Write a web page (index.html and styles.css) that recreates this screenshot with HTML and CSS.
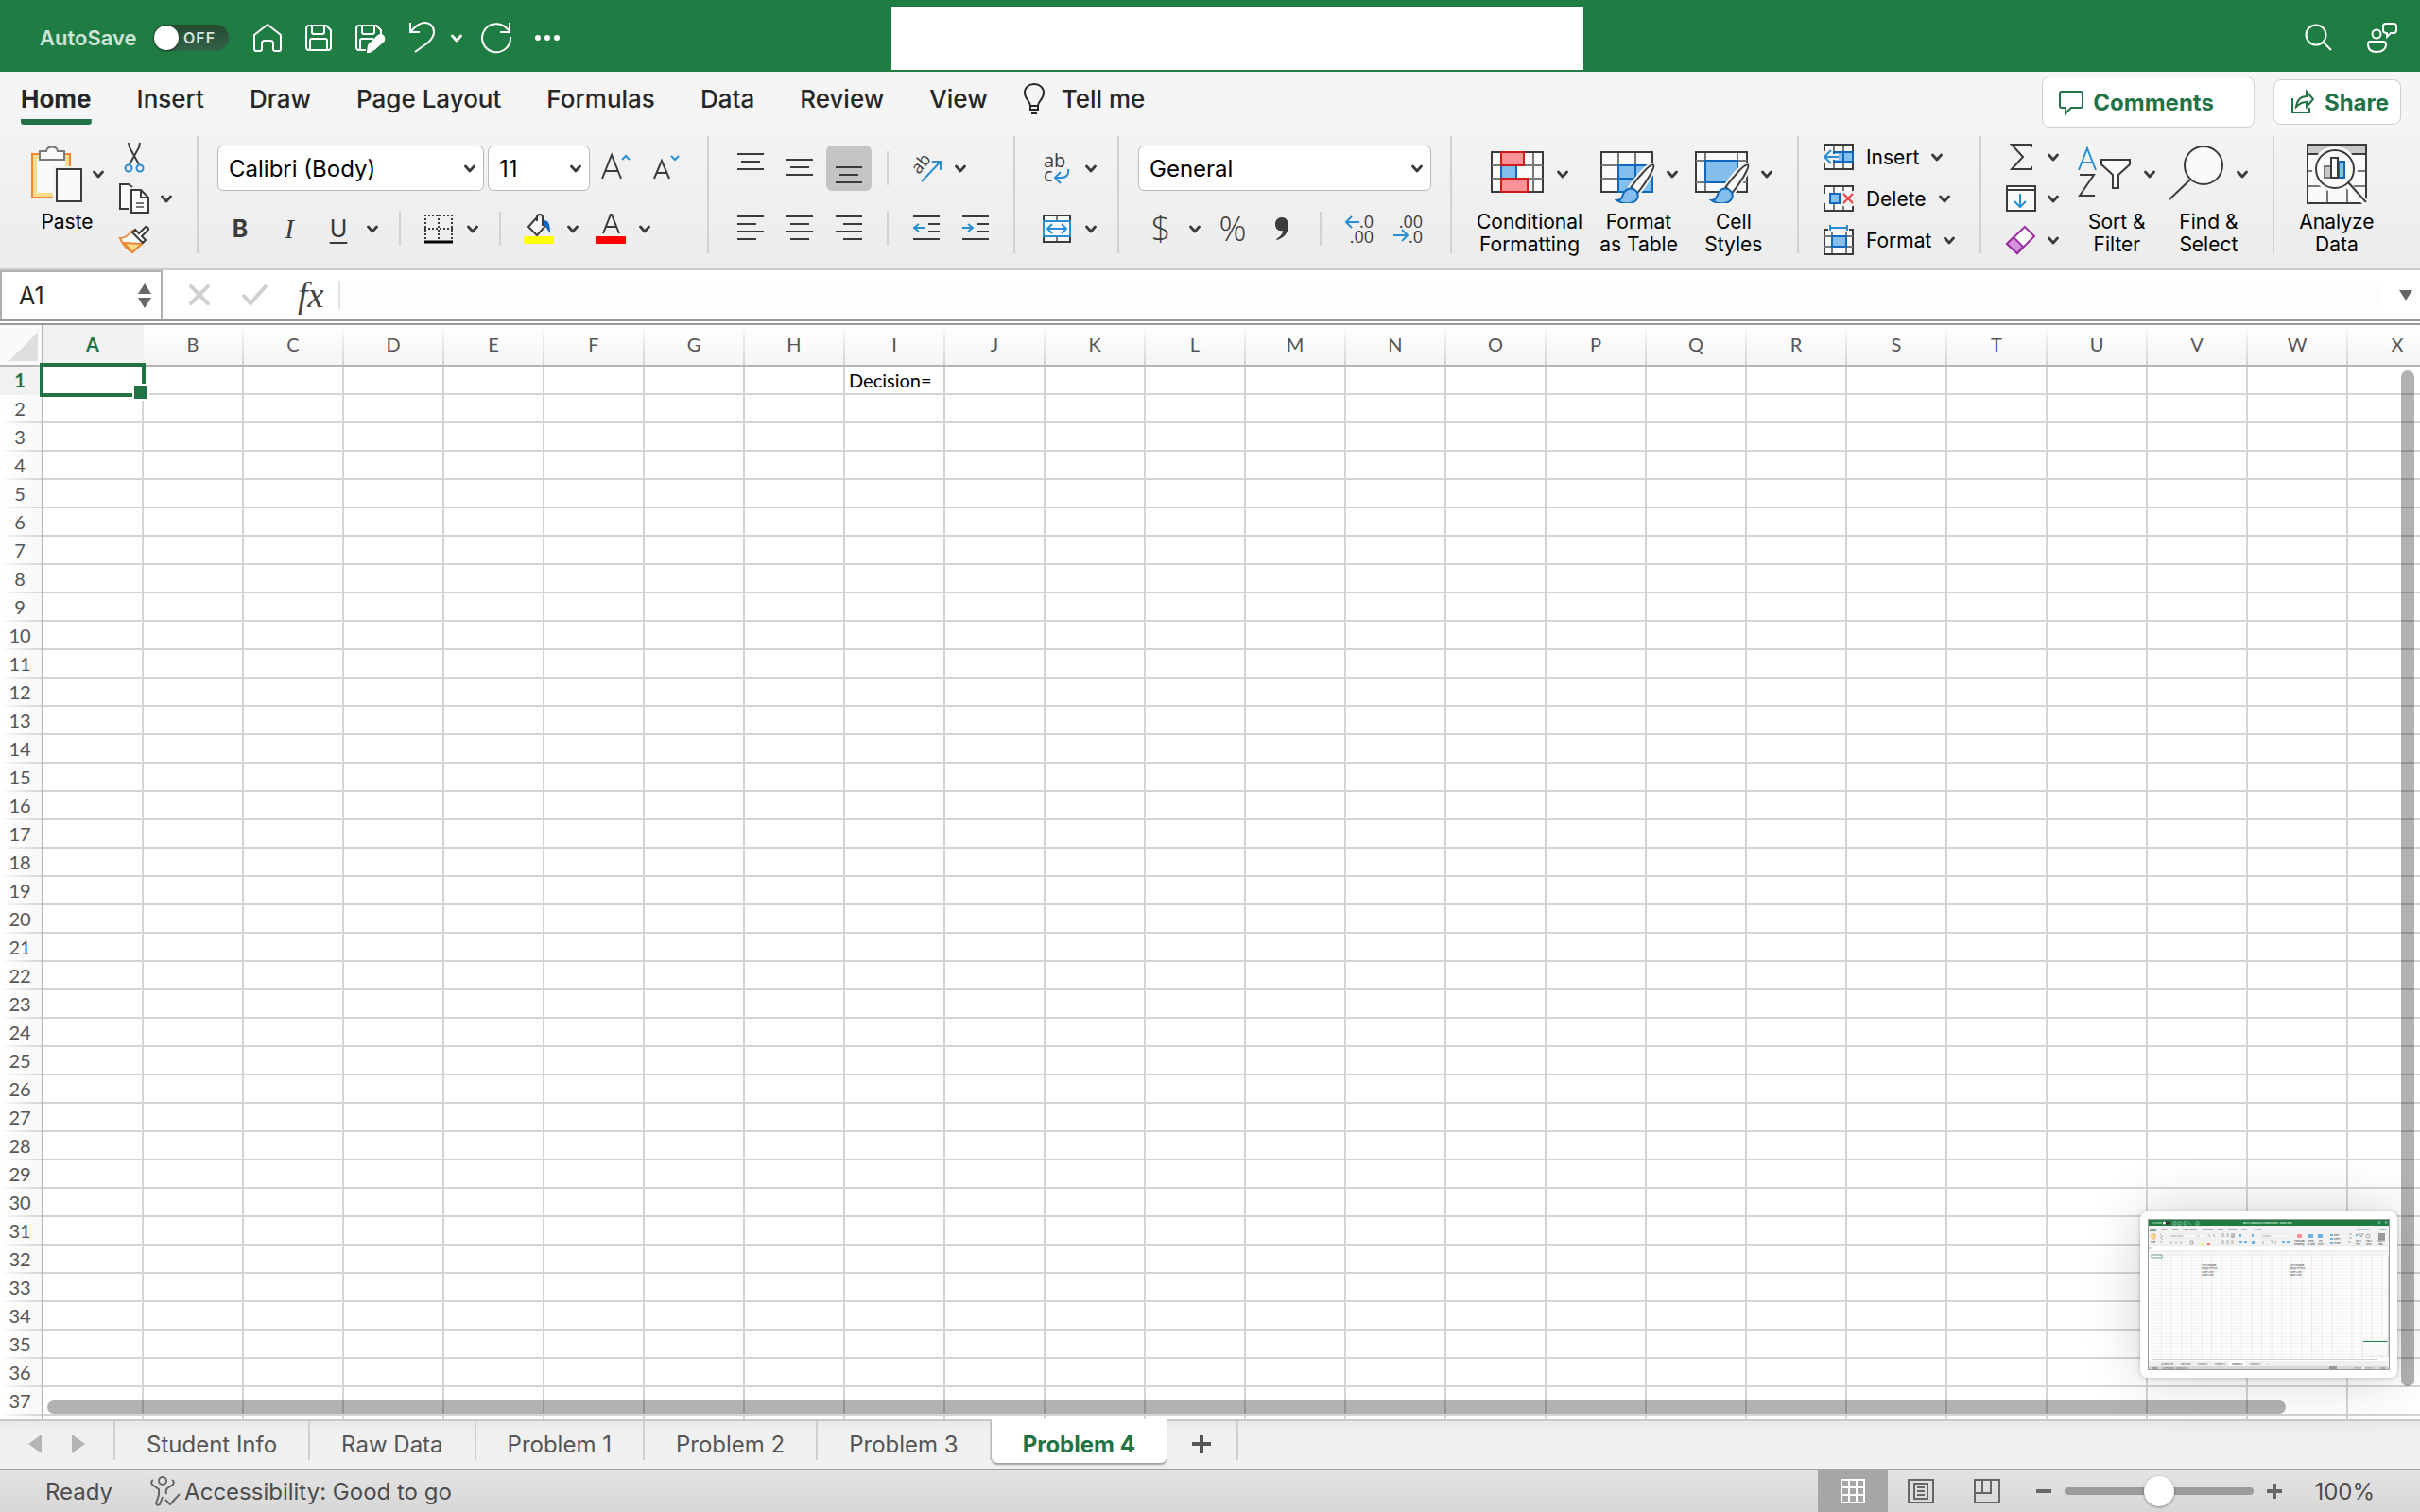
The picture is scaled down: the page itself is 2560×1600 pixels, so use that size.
FILE: index.html
```html
<!DOCTYPE html>
<html lang="en">
<head>
    <meta charset="UTF-8">
    <meta name="viewport" content="width=device-width, initial-scale=1.0">
    <title>Workbook</title>
    <link rel="stylesheet" href="styles.css">
</head>
<body>
    <svg class="sprite" aria-hidden="true">
        <symbol id="chevron" viewBox="0 0 12 9"><path d="M1.5 2L6 7l4.5-5" fill="none" stroke="currentColor" stroke-width="2.8" stroke-linecap="round" stroke-linejoin="round"/></symbol>
        <symbol id="brush" viewBox="0 0 42 42">
            <path d="M40 1C36 0 24 14 16 25l7 6C31 21 42 4 40 1Z" fill="#fafafa" stroke="#f1f1f1" stroke-width="6"/>
            <path d="M39.500 1.500C36 0 24 14 16 25l7 6C31 21 42 4 39.500 1.500Z" fill="#fafafa" stroke="#3b3b3b" stroke-width="2"/>
            <path d="M1 39c6 0 5-5 8-9 4-5 10-4 13 0 3 5 0 11-7 12-6 1-11-1-14-3Z" fill="#83beec" stroke="#0f68bc" stroke-width="2"/>
        </symbol>
    </svg>

    <header class="titlebar">
        <label class="autosave" for="autosave">AutoSave</label>
        <span class="switch">
            <input type="checkbox" id="autosave">
            <span class="switch-text">OFF</span>
        </span>
        <div class="quick">
            <button type="button" aria-label="Home"><svg width="30" height="32" viewBox="0 0 30 32"><path d="M1 28V13L15 2l14 11v15q0 2-2 2h-4q-2 0-2-2v-6q0-3-3-3h-6q-3 0-3 3v6q0 2-2 2H3q-2 0-2-2Z"/></svg></button>
            <button type="button" aria-label="Save"><svg width="28" height="32" viewBox="0 -2 28 32"><path d="M1 4q0-3 3-3h18l5 5v18q0 3-3 3H4q-3 0-3-3ZM7 1v7q0 2 2 2h9q2 0 2-2V1M5 27V17q0-2 2-2h14q2 0 2 2v10"/></svg></button>
            <button type="button" aria-label="Save a copy"><svg width="32" height="32" viewBox="0 -2 32 32"><path d="M11 27H4q-3 0-3-3V4q0-3 3-3h18l5 5v6M7 1v7q0 2 2 2h9q2 0 2-2V1M5 27V17q0-2 2-2h12"/><path class="solid" d="M13 29l1-7 10-10q3-2 5 0t1 5L20 26l-5 3Z"/></svg></button>
            <button type="button" aria-label="Undo"><svg width="28" height="34" viewBox="0 0 28 34"><path d="M1 1v10h10M1 11C7 4 11 1 16 1c6 0 10 4 10 10 0 5-3 8-6 11L6 32"/></svg></button>
            <button type="button" class="undo-more" aria-label="Undo history"><svg width="12" height="9"><use href="#chevron"/></svg></button>
            <button type="button" aria-label="Redo"><svg width="32" height="32" viewBox="0 0 32 32"><path d="M31 15A15 15 0 1 1 26 5l4 4M30 0v10H20"/></svg></button>
            <button type="button" aria-label="More"><svg width="26" height="6" viewBox="0 0 26 6"><circle class="solid" cx="3" cy="3" r="2"/><circle class="solid" cx="13" cy="3" r="2"/><circle class="solid" cx="23" cy="3" r="2"/></svg></button>
        </div>
        <div class="doc-title"></div>
        <div class="title-right">
            <button type="button" aria-label="Search"><svg width="30" height="30" viewBox="0 0 30 30"><circle cx="12" cy="12" r="10.500"/><path d="M20 20l8 8"/></svg></button>
            <button type="button" aria-label="Presence"><svg width="32" height="32" viewBox="0 0 32 32"><circle cx="10" cy="12" r="4.500"/><path d="M3 20h14q3 0 3 3c0 5-4 8-10 8s-9-3-9-8q0-3 2-3ZM20 1h8q3 0 3 3v4q0 3-3 3h-3l-4 4v-4q-4 0-4-3V4q0-3 3-3Z"/></svg></button>
        </div>
    </header>

    <nav class="tabs">
        <a href="#" class="active">Home</a>
        <a href="#">Insert</a>
        <a href="#">Draw</a>
        <a href="#">Page Layout</a>
        <a href="#">Formulas</a>
        <a href="#">Data</a>
        <a href="#">Review</a>
        <a href="#">View</a>
        <a href="#" class="tell-me"><svg width="22" height="34" viewBox="0 0 22 34"><path d="M7 24c0-5-6-7-6-14 0-5 4-9 10-9s10 4 10 9c0 7-6 9-6 14v4H7ZM7 24h8M8 32h6" fill="none" stroke="#262626" stroke-width="2"/></svg>Tell me</a>
        <div class="tabs-right">
            <button type="button" class="comments"><svg width="26" height="26" viewBox="0 0 26 26"><path d="M3 2h20q2 0 2 2v13q0 2-2 2H13l-6 6v-6H3q-2 0-2-2V4q0-2 2-2Z"/></svg>Comments</button>
            <button type="button" class="share"><svg width="26" height="26" viewBox="0 0 26 26"><path d="M2 9v15h18v-5M17 2v5C11 7 7 11 6 18c3-3 6-5 11-5v5l7-8Z"/></svg>Share</button>
        </div>
    </nav>

    <section class="ribbon">
        <div class="group clipboard">
            <button type="button" class="big">
                <span class="big-icon"><svg width="56" height="60" viewBox="0 0 56 60"><path d="M2 9h40v46H2z" fill="#f8dc8e" stroke="#ed8733" stroke-width="2"/><path d="M7 14h30v36H7z" fill="#fafafa"/><path d="M24 22h32v38H24z" fill="#f2f2f2"/><path d="M10 6h7c1-6 11-6 12 0h7v9H10z" fill="#fafafa" stroke="#787878" stroke-width="2"/><path d="M28 25h26v34H28z" fill="#fafafa" stroke="#3b3b3b" stroke-width="2"/></svg>
                <svg class="chev" width="12" height="9"><use href="#chevron"/></svg></span>
                <span class="caption">Paste</span>
            </button>
            <div class="stack">
                <div class="line"><button type="button" aria-label="Cut"><svg width="32" height="32" viewBox="0 0 32 32"><path d="M10 1l1 5 10 18M22 1l-1 5-10 18" fill="none" stroke="#3b3b3b" stroke-width="2"/><circle cx="10" cy="28" r="3.500" fill="none" stroke="#2a8ed4" stroke-width="2"/><circle cx="22" cy="28" r="3.500" fill="none" stroke="#2a8ed4" stroke-width="2"/></svg></button></div>
                <div class="line"><button type="button" aria-label="Copy"><svg width="32" height="32" viewBox="0 0 32 32"><path d="M10 27H1V1h9l4 3" fill="#fafafa" stroke="#3b3b3b" stroke-width="2"/><path d="M13 7h10l8 8v16H13z" fill="#fafafa" stroke="#3b3b3b" stroke-width="2"/><path d="M23 7v8h8" fill="none" stroke="#3b3b3b" stroke-width="2"/><path d="M18 21h8M18 25h8" stroke="#787878" stroke-width="2"/></svg></button><button type="button" class="drop" aria-label="Copy options"><svg width="12" height="9"><use href="#chevron"/></svg></button></div>
                <div class="line"><button type="button" aria-label="Format Painter"><svg width="32" height="32" viewBox="0 0 32 32"><path d="M1 14c5 0 9-3 13-8l12 12c-5 5-9 7-12 11C9 26 4 21 1 14Z" fill="#fafafa" stroke="#ed8733" stroke-width="2"/><path d="M5 19l19 1-10 9Z" fill="#f8dc8e" stroke="#ed8733" stroke-width="2"/><path d="M14 8l3-3 4 4 7-7q3 0 3 3l-7 7 4 4-3 3Z" fill="#fafafa" stroke="#3b3b3b" stroke-width="2"/></svg></button></div>
            </div>
        </div>

        <div class="group rows">
            <div class="row">
                <span class="select font-name"><select aria-label="Font"><option>Calibri (Body)</option></select><svg width="12" height="9"><use href="#chevron"/></svg></span>
                <span class="select font-size"><select aria-label="Font size"><option>11</option></select><svg width="12" height="9"><use href="#chevron"/></svg></span>
                <button type="button" class="tool" aria-label="Increase font size"><svg width="32" height="32" viewBox="0 0 32 32"><path d="M1 27L11 2l10 25M4 19h14" fill="none" stroke="#3b3b3b" stroke-width="2"/><path d="M22 7l4-4 4 4" fill="none" stroke="#2a8ed4" stroke-width="2"/></svg></button>
                <button type="button" class="tool" aria-label="Decrease font size"><svg width="32" height="32" viewBox="0 0 32 32"><path d="M4 27l8-19 8 19M7 21h10" fill="none" stroke="#3b3b3b" stroke-width="2"/><path d="M22 3l4 4 4-4" fill="none" stroke="#2a8ed4" stroke-width="2"/></svg></button>
            </div>
            <div class="row low">
                <button type="button" class="tool bold">B</button>
                <button type="button" class="tool italic">I</button>
                <span class="split"><button type="button" class="tool underline">U</button><button type="button" class="drop" aria-label="Underline options"><svg width="12" height="9"><use href="#chevron"/></svg></button></span>
                <span class="sep"></span>
                <span class="split"><button type="button" class="tool" aria-label="Borders"><svg width="30" height="30" viewBox="0 0 30 30"><path d="M0 1h30M0 15h30M1 0v28M15 0v28M29 0v28" stroke="#3b3b3b" stroke-width="2" stroke-dasharray="2 2"/><path d="M0 29h30" stroke="#000" stroke-width="3"/></svg></button><button type="button" class="drop" aria-label="Border options"><svg width="12" height="9"><use href="#chevron"/></svg></button></span>
                <span class="sep"></span>
                <span class="split"><button type="button" class="tool" aria-label="Fill color"><svg width="32" height="32" viewBox="0 0 32 32"><path d="M0 24h32v8H0z" fill="#ffff0a"/><path d="M14 4L5 14l9 9 10-11-4-3" fill="#fafafa" stroke="#3b3b3b" stroke-width="2"/><path d="M14 8V4q0-3 3-3t3 3v9" fill="none" stroke="#3b3b3b" stroke-width="2"/><path d="M21 7c6 0 7 5 7 14-3-4-4-7-7-9Z" fill="#0f68bc"/></svg></button><button type="button" class="drop" aria-label="Fill options"><svg width="12" height="9"><use href="#chevron"/></svg></button></span>
                <span class="split"><button type="button" class="tool" aria-label="Font color"><svg width="32" height="32" viewBox="0 0 32 32"><path d="M0 24h32v8H0z" fill="#fe0000"/><path d="M8 21l8-20h1l8 20M11 14h11" fill="none" stroke="#3b3b3b" stroke-width="2"/></svg></button><button type="button" class="drop" aria-label="Font color options"><svg width="12" height="9"><use href="#chevron"/></svg></button></span>
            </div>
        </div>

        <div class="group rows tight">
            <div class="row">
                <button type="button" class="tool" aria-label="Top align"><svg class="lines" width="28" height="32"><path d="M0 1h28M4 9h20M0 17h28"/></svg></button>
                <button type="button" class="tool" aria-label="Middle align"><svg class="lines" width="28" height="32"><path d="M0 7h28M4 15h20M0 23h28"/></svg></button>
                <button type="button" class="tool pressed" aria-label="Bottom align"><svg class="lines" width="28" height="32"><path d="M0 15h28M4 23h20M0 31h28"/></svg></button>
                <span class="sep"></span>
                <span class="split"><button type="button" class="tool" aria-label="Orientation"><svg width="32" height="32" viewBox="0 0 32 32"><text x="8" y="23" transform="rotate(-50 8 23)" font-size="18">ab</text><path d="M11 30L31 9M22 9h9v9" fill="none" stroke="#2a8ed4" stroke-width="2"/></svg></button><button type="button" class="drop" aria-label="Orientation options"><svg width="12" height="9"><use href="#chevron"/></svg></button></span>
            </div>
            <div class="row low">
                <button type="button" class="tool" aria-label="Align left"><svg class="lines" width="28" height="28"><path d="M0 1h28M0 9h20M0 17h28M0 25h20"/></svg></button>
                <button type="button" class="tool" aria-label="Center"><svg class="lines" width="28" height="28"><path d="M0 1h28M4 9h20M0 17h28M4 25h20"/></svg></button>
                <button type="button" class="tool" aria-label="Align right"><svg class="lines" width="28" height="28"><path d="M0 1h28M8 9h20M0 17h28M8 25h20"/></svg></button>
                <span class="sep"></span>
                <button type="button" class="tool" aria-label="Decrease indent"><svg class="lines" width="28" height="28"><path d="M0 1h28M16 9h12M16 17h12M0 25h28"/><path class="blue" d="M12 13H2M6 9l-5 4 5 4"/></svg></button>
                <button type="button" class="tool" aria-label="Increase indent"><svg class="lines" width="28" height="28"><path d="M0 1h28M16 9h12M16 17h12M0 25h28"/><path class="blue" d="M0 13h10M6 9l5 4-5 4"/></svg></button>
            </div>
        </div>

        <div class="group rows tight">
            <div class="row">
                <span class="split"><button type="button" class="tool" aria-label="Wrap text"><svg width="30" height="32" viewBox="0 0 30 32"><text x="1" y="15" font-size="20">ab</text><text x="1" y="30" font-size="20">c</text><path d="M27 17c1 6-2 9-8 9h-5M19 20l-6 6 6 6" fill="none" stroke="#2a8ed4" stroke-width="2"/></svg></button><button type="button" class="drop" aria-label="Wrap options"><svg width="12" height="9"><use href="#chevron"/></svg></button></span>
            </div>
            <div class="row low">
                <span class="split"><button type="button" class="tool" aria-label="Merge"><svg width="30" height="30" viewBox="0 0 30 30"><path d="M1 1h28v28H1z" fill="#fafafa" stroke="#3b3b3b" stroke-width="2"/><path d="M15 2v5M15 23v5" stroke="#787878" stroke-width="2"/><path d="M1 7h28v16H1z" fill="#fafafa" stroke="#2a8ed4" stroke-width="2"/><path d="M5 15h20M10 10l-5 5 5 5M20 10l5 5-5 5" fill="none" stroke="#2a8ed4" stroke-width="2"/></svg></button><button type="button" class="drop" aria-label="Merge options"><svg width="12" height="9"><use href="#chevron"/></svg></button></span>
            </div>
        </div>

        <div class="group rows">
            <div class="row">
                <span class="select number-format"><select aria-label="Number format"><option>General</option></select><svg width="12" height="9"><use href="#chevron"/></svg></span>
            </div>
            <div class="row low">
                <span class="split"><button type="button" class="tool symbol">$</button><button type="button" class="drop" aria-label="Currency options"><svg width="12" height="9"><use href="#chevron"/></svg></button></span>
                <button type="button" class="tool symbol">%</button>
                <button type="button" class="tool" aria-label="Comma style"><svg width="16" height="26" viewBox="0 0 16 26"><path d="M8 1c5 0 7 4 7 9 0 7-4 12-12 15l-1-1c5-3 7-6 7-9-5 1-8-2-8-7 0-4 3-7 7-7Z" fill="#3b3b3b"/></svg></button>
                <span class="sep"></span>
                <button type="button" class="tool" aria-label="Increase decimal"><svg width="32" height="32" viewBox="0 0 32 32"><text x="31" y="15" text-anchor="end" font-size="18">.0</text><text x="31" y="31" text-anchor="end" font-size="18">.00</text><path d="M16 9H2M8 3L2 9l6 6" fill="none" stroke="#2a8ed4" stroke-width="2"/></svg></button>
                <button type="button" class="tool" aria-label="Decrease decimal"><svg width="32" height="32" viewBox="0 0 32 32"><text x="31" y="15" text-anchor="end" font-size="18">.00</text><text x="31" y="31" text-anchor="end" font-size="18">.0</text><path d="M0 23h15M9 17l6 6-6 6" fill="none" stroke="#2a8ed4" stroke-width="2"/></svg></button>
            </div>
        </div>

        <div class="group wide styles">
            <button type="button" class="big">
                <span class="big-icon"><svg width="56" height="60" viewBox="0 0 56 60"><path d="M1 7h54v42H1z" fill="#fafafa" stroke="#3b3b3b" stroke-width="2"/><path d="M45 8v40M1 21h54M1 35h54" stroke="#787878" stroke-width="2"/><path d="M28 22h16v12H28z" fill="#fafafa"/><path d="M11 21h16v14H11z" fill="#83beec" stroke="#0f68bc" stroke-width="2"/><path d="M11 7h24v14H11zM11 35h28v14H11z" fill="#fc9197" stroke="#d11b1b" stroke-width="2"/></svg>
                <svg class="chev" width="12" height="9"><use href="#chevron"/></svg></span>
                <span class="caption">Conditional<br>Formatting</span>
            </button>
            <button type="button" class="big">
                <span class="big-icon"><svg width="56" height="60" viewBox="0 0 56 60"><path d="M1 7h54v42H1z" fill="#fafafa" stroke="#3b3b3b" stroke-width="2"/><path d="M19 21h36v28H19z" fill="#83beec" stroke="#0f68bc" stroke-width="2"/><path d="M37 21v28M19 35h36" stroke="#0f68bc" stroke-width="2"/><path d="M19 8v12M37 8v12M1 21h17M1 35h17" stroke="#787878" stroke-width="2"/><use href="#brush" x="15" y="19" width="45" height="42"/></svg>
                <svg class="chev" width="12" height="9"><use href="#chevron"/></svg></span>
                <span class="caption">Format<br>as Table</span>
            </button>
            <button type="button" class="big">
                <span class="big-icon"><svg width="56" height="60" viewBox="0 0 56 60"><path d="M1 7h54v42H1z" fill="#fafafa" stroke="#3b3b3b" stroke-width="2"/><path d="M11 8v40M45 8v40M1 16h54M1 39h54" stroke="#787878" stroke-width="2"/><path d="M11 16h34v23H11z" fill="#83beec" stroke="#0f68bc" stroke-width="2"/><use href="#brush" x="15" y="19" width="45" height="42"/></svg>
                <svg class="chev" width="12" height="9"><use href="#chevron"/></svg></span>
                <span class="caption">Cell<br>Styles</span>
            </button>
        </div>

        <div class="group wide">
            <div class="stack cells">
                <button type="button" class="line"><svg width="32" height="32" viewBox="0 0 32 32"><path d="M1 3h30v26H1z" fill="#fafafa" stroke="#3b3b3b" stroke-width="2"/><path d="M11 4v24M21 4v24" stroke="#787878" stroke-width="2"/><path d="M11 11h20v10H11z" fill="#83beec" stroke="#0f68bc" stroke-width="2"/><path d="M21 11v10" stroke="#0f68bc" stroke-width="2"/><path d="M0 10h10v12H0z" fill="#f1f1f1"/><path d="M16 16H2M8 9l-7 7 7 7" fill="none" stroke="#f1f1f1" stroke-width="6"/><path d="M16 16H2M8 9l-7 7 7 7" fill="none" stroke="#2a8ed4" stroke-width="2"/></svg>Insert<svg class="chev" width="12" height="9"><use href="#chevron"/></svg></button>
                <button type="button" class="line"><svg width="32" height="32" viewBox="0 0 32 32"><path d="M1 3h30v26H1z" fill="#fafafa" stroke="#3b3b3b" stroke-width="2"/><path d="M11 4v24M21 4v24" stroke="#787878" stroke-width="2"/><path d="M0 11h5v10H0zM18 8h14v16H18z" fill="#f1f1f1"/><path d="M7 11h10v10H7z" fill="#83beec" stroke="#0f68bc" stroke-width="2"/><path d="M21 11l10 10M31 11L21 21" stroke="#ec3d41" stroke-width="2"/></svg>Delete<svg class="chev" width="12" height="9"><use href="#chevron"/></svg></button>
                <button type="button" class="line"><svg width="32" height="32" viewBox="0 0 32 32"><path d="M1 5h30v26H1z" fill="#fafafa" stroke="#3b3b3b" stroke-width="2"/><path d="M9 6v24M24 6v24M1 12h30M1 23h30" stroke="#787878" stroke-width="2"/><path d="M5 0h22v7H5z" fill="#f1f1f1"/><path d="M9 12h15v11H9z" fill="#83beec" stroke="#0f68bc" stroke-width="2"/><path d="M7 3h18M7 0v6M25 0v6" stroke="#2a8ed4" stroke-width="2"/></svg>Format<svg class="chev" width="12" height="9"><use href="#chevron"/></svg></button>
            </div>
        </div>

        <div class="group wide editing">
            <div class="stack">
                <div class="line"><button type="button" aria-label="AutoSum"><svg width="32" height="32" viewBox="0 0 32 32"><path d="M27 6V3H6l12 13L6 29h21v-3" fill="none" stroke="#3b3b3b" stroke-width="2"/></svg></button><button type="button" class="drop" aria-label="AutoSum options"><svg width="12" height="9"><use href="#chevron"/></svg></button></div>
                <div class="line"><button type="button" aria-label="Fill"><svg width="32" height="32" viewBox="0 0 32 32"><path d="M1 3h30v26H1z" fill="#fafafa" stroke="#3b3b3b" stroke-width="2"/><path d="M1 7h30" stroke="#3b3b3b" stroke-width="2"/><path d="M15 11v14M9 19l6 6 6-6" fill="none" stroke="#2a8ed4" stroke-width="2"/></svg></button><button type="button" class="drop" aria-label="Fill options"><svg width="12" height="9"><use href="#chevron"/></svg></button></div>
                <div class="line"><button type="button" aria-label="Clear"><svg width="32" height="32" viewBox="0 0 32 32"><path d="M20 2l10 10-18 18L1 20Z" fill="#fafafa" stroke="#9b30a5" stroke-width="2"/><path d="M8 13l10 10-6 7L1 20Z" fill="#d492d9" stroke="#9b30a5" stroke-width="2"/></svg></button><button type="button" class="drop" aria-label="Clear options"><svg width="12" height="9"><use href="#chevron"/></svg></button></div>
            </div>
            <button type="button" class="big">
                <span class="big-icon"><svg width="56" height="60" viewBox="0 0 56 60"><path d="M1 26L10 3l9 23M4 18h12" fill="none" stroke="#2a8ed4" stroke-width="2"/><path d="M2 31h15L2 53h16" fill="none" stroke="#3b3b3b" stroke-width="2"/><path d="M25 15h30v5L43 31v14h-6V31L25 20Z" fill="#fafafa" stroke="#3b3b3b" stroke-width="2"/></svg>
                <svg class="chev" width="12" height="9"><use href="#chevron"/></svg></span>
                <span class="caption">Sort &amp;<br>Filter</span>
            </button>
            <button type="button" class="big">
                <span class="big-icon"><svg width="58" height="60" viewBox="0 0 58 60"><circle cx="37" cy="21" r="20" fill="#fafafa" stroke="#3b3b3b" stroke-width="2"/><path d="M23 36L1 57" stroke="#3b3b3b" stroke-width="2"/></svg>
                <svg class="chev" width="12" height="9"><use href="#chevron"/></svg></span>
                <span class="caption">Find &amp;<br>Select</span>
            </button>
        </div>

        <div class="group wide analyze">
            <button type="button" class="big">
                <span class="big-icon"><svg width="64" height="64" viewBox="0 0 64 64"><path d="M1 1h62v62H1z" fill="#fafafa" stroke="#3b3b3b" stroke-width="2"/><path d="M2 2h60v8H2z" fill="#c8c8c8"/><path d="M1 11h62" stroke="#3b3b3b" stroke-width="2"/><path d="M2 29h60M2 45h60M22 46v16M43 46v16" stroke="#787878" stroke-width="2"/><path d="M40 40l24 24" stroke="#fafafa" stroke-width="7"/><circle cx="30" cy="27" r="24" fill="#fafafa"/><circle cx="30" cy="27" r="20" fill="#fafafa" stroke="#3b3b3b" stroke-width="2"/><path d="M44 41l19 21" stroke="#3b3b3b" stroke-width="2"/><path d="M19 24h7v12h-7z" fill="#c8c8c8" stroke="#787878" stroke-width="2"/><path d="M34 19h6v17h-6z" fill="#83beec" stroke="#0f68bc" stroke-width="2"/><path d="M26 15h7v21h-7z" fill="#fafafa" stroke="#3b3b3b" stroke-width="2"/></svg></span>
                <span class="caption">Analyze<br>Data</span>
            </button>
        </div>
    </section>

    <div class="formula-bar">
        <div class="name-box">
            <input type="text" value="A1" aria-label="Name box">
            <svg width="14" height="26" viewBox="0 0 14 26"><path d="M7 0l7 11H0ZM0 15h14L7 26Z" fill="#666"/></svg>
        </div>
        <button type="button" aria-label="Cancel"><svg width="24" height="24" viewBox="0 0 24 24"><path d="M3 3l18 18M21 3L3 21" stroke="#d0d0d0" stroke-width="4" stroke-linecap="round"/></svg></button>
        <button type="button" aria-label="Enter"><svg width="28" height="24" viewBox="0 0 28 24"><path d="M3 13l7 8L26 3" fill="none" stroke="#d0d0d0" stroke-width="4" stroke-linecap="round"/></svg></button>
        <button type="button" class="fx">fx</button>
        <input type="text" class="formula" aria-label="Formula">
        <button type="button" class="expand" aria-label="Expand formula bar"><svg width="14" height="11" viewBox="0 0 14 11"><path d="M0 0h14L7 11Z" fill="#666"/></svg></button>
    </div>

    <main class="sheet">
        <table class="grid" id="grid">
            <thead></thead>
            <tbody></tbody>
        </table>
        <div class="scroll-y"></div>
        <div class="scroll-x"></div>
    </main>

    <nav class="sheet-tabs">
        <div class="sheet-arrows">
            <svg width="14" height="20" viewBox="0 0 14 20"><path d="M14 0v20L0 10Z"/></svg>
            <svg width="14" height="20" viewBox="0 0 14 20"><path d="M0 0v20l14-10Z"/></svg>
        </div>
        <a href="#">Student Info</a>
        <a href="#">Raw Data</a>
        <a href="#">Problem 1</a>
        <a href="#">Problem 2</a>
        <a href="#">Problem 3</a>
        <a href="#" class="active">Problem 4</a>
        <button type="button" aria-label="Add sheet"><svg width="20" height="20" viewBox="0 0 20 20"><path d="M10 0v20M0 10h20" stroke="#555" stroke-width="4"/></svg></button>
    </nav>

    <footer class="status">
        <span>Ready</span>
        <button type="button" class="a11y"><svg width="32" height="32" viewBox="0 0 32 32"><circle cx="13" cy="5" r="4"/><path d="M3 4q-3 2-1 5l7 5v6L6 29q1 3 4 1l3-8M23 4q3 2 1 5l-6 4q-2 2-1 6M16 25l5 5L31 19"/></svg>Accessibility: Good to go</button>
        <div class="views">
            <button type="button" class="current" aria-label="Normal view"><svg width="26" height="26" viewBox="0 0 26 26"><path d="M1 1h24v24H1zM9 1v24M17 1v24M1 9h24M1 17h24"/></svg></button>
            <button type="button" aria-label="Page layout view"><svg width="28" height="26" viewBox="0 0 28 26"><path d="M1 1h26v24H1zM7 5h14v16H7zM10 9h8M10 13h8M10 17h8"/></svg></button>
            <button type="button" aria-label="Page break view"><svg width="28" height="26" viewBox="0 0 28 26"><path d="M1 1h26v24H1zM9 1v14M18 1v14H1"/></svg></button>
        </div>
        <div class="zoom">
            <button type="button" aria-label="Zoom out"><svg width="16" height="16"><path d="M0 8h16" stroke="#666" stroke-width="4"/></svg></button>
            <input type="range" min="0" max="100" value="50" aria-label="Zoom">
            <button type="button" aria-label="Zoom in"><svg width="16" height="16"><path d="M0 8h16M8 0v16" stroke="#666" stroke-width="4"/></svg></button>
            <span class="zoom-value">100%</span>
        </div>
    </footer>

    <!-- floating capture preview -->
    <div class="preview">
        <svg id="preview" viewBox="0 0 256 160">
            <path d="M0 0h256v160H0z" fill="#fff"/>
            <path d="M0 0h256v7H0z" fill="#1f7d43"/>
            <path d="M0 7h256v21H0z" fill="#f2f2f2"/>
            <path d="M0 34h256v4H0z" fill="#f7f7f7"/>
            <path d="M0 28h256M0 34h256M0 38h256" stroke="#ccc" stroke-width=".5"/>
            <g id="preview-lines" stroke="#dcdcdc" stroke-width=".5" fill="none"></g>
            <g fill="#cfe6d8" font-size="2.500">
                <text x="4" y="4.500">AutoSave</text>
                <text x="101" y="4.500" fill="#fff" font-weight="700">MATH-MakeUp-Answers.xlsx - Read-Only</text>
            </g>
            <rect x="16" y="2.500" width="8" height="3" rx="1.500" fill="#333"/><circle cx="17.500" cy="4" r="1.500" fill="#fff"/>
            <g fill="none" stroke="#cfe6d8" stroke-width=".5"><path d="M27 3h3v3h-3zM32 3h3v3h-3zM38 3h3v3h-3zM43 3l3 3M51 3h3v3h-3z"/><circle cx="245" cy="3.500" r="1"/><circle cx="252" cy="3.500" r="1"/></g>
            <g fill="#333" font-size="2.600">
                <text x="2" y="11.500" font-weight="700">Home</text><text x="14" y="11.500">Insert</text><text x="26" y="11.500">Draw</text><text x="37" y="11.500">Page Layout</text><text x="58" y="11.500">Formulas</text><text x="74" y="11.500">Data</text><text x="85" y="11.500">Review</text><text x="99" y="11.500">View</text><text x="112" y="11.500">Tell me</text>
                <text x="24" y="18.500" font-size="2.200">Calibri (Body)</text><text x="53" y="18.500" font-size="2.200">11</text><text x="122" y="18.500" font-size="2.200">General</text>
                <text x="3" y="24.500" font-size="2">Paste</text>
                <text x="155" y="24" font-size="2">Conditional</text><text x="155" y="26.500" font-size="2">Formatting</text><text x="169" y="24" font-size="2">Format</text><text x="169" y="26.500" font-size="2">as Table</text><text x="181" y="24" font-size="2">Cell</text><text x="180" y="26.500" font-size="2">Styles</text>
                <text x="197" y="17.500" font-size="2">Insert</text><text x="197" y="21.500" font-size="2">Delete</text><text x="197" y="26" font-size="2">Format</text>
                <text x="220" y="24" font-size="2">Sort &amp;</text><text x="220" y="26.500" font-size="2">Filter</text><text x="231" y="24" font-size="2">Find &amp;</text><text x="231" y="26.500" font-size="2">Select</text><text x="243" y="24" font-size="2">Analyze</text><text x="244" y="26.500" font-size="2">Data</text>
                <text x="1" y="32" font-size="2.200">A1</text>
                <text x="57" y="50" font-size="2.300">Point Estimate</text><text x="57" y="53" font-size="2.300">Margin of Error</text><text x="57" y="56.500" font-size="2.300">Lower Limit</text><text x="57" y="59.500" font-size="2.300">Upper Limit</text>
                <text x="150" y="50" font-size="2.300">Point Estimate</text><text x="150" y="53" font-size="2.300">Margin of Error</text><text x="150" y="56.500" font-size="2.300">Lower Limit</text><text x="150" y="59.500" font-size="2.300">Upper Limit</text>
            </g>
            <g fill="#217346" font-size="2.600"><path d="M2 12.500h7v.6H2z"/><text x="221" y="11.500">Comments</text><text x="245" y="11.500">Share</text></g>
            <path d="M4 16h4v5H4z" fill="#f8dc8e" stroke="#ed8733" stroke-width=".5"/>
            <path d="M23 15.500h28v4.500H23zM52 15.500h10v4.500H52zM121 15.500h30v4.500h-30z" fill="#fff" fill-opacity=".4" stroke="#ccc" stroke-width=".3"/>
            <g fill="none" stroke="#666" stroke-width=".5"><path d="M13 16l3 3M13 19l3 3M13 23l2 2M64 16l2 3M69 16l2 3M78 16h3M78 18h3M83 16h3M83 18h3M78 23h3M78 25h3M83 23h3M83 25h3M88 23h3M88 25h3M25 23v3M30 23v3M35 23v3M45 23h3v3h-3zM122 23v3M130 23h2v3M135 23v3M213 16h3M213 20h3"/><circle cx="233" cy="18" r="2"/><path d="M224 16h4l-2 3ZM212 24h3"/></g>
            <path d="M88 15h4v5h-4z" fill="#bbb"/><path d="M56 25.500h3v1h-3z" fill="#ffe800"/><path d="M63 25.500h3v1h-3z" fill="#f00"/>
            <path d="M158 16h5v4h-5z" fill="#fc9197"/><path d="M170 16h5v4h-5zM180 16h5v4h-5zM97 16h2v3h-2zM97 23h3v2h-3zM102 23h3v2h-3zM110 16h2v3h-2zM110 23h3v3h-3zM142 23h3v2h-3zM147 23h3v2h-3zM193 16h3v2h-3zM193 20h3v2h-3zM193 24h3v2h-3zM220 16h2v2h-2z" fill="#6db0e4"/>
            <path d="M244 15h7v7h-7z" fill="#999"/>
            <path d="M4 38h11v3H4z" fill="none" stroke="#217346" stroke-width=".6"/>
            <path d="M4 148h238v1H4zM254 39h1.500v107H254z" fill="#d0d0d0"/>
            <path d="M0 150h256v5H0z" fill="#efefef"/><path d="M0 155.500h256V160H0z" fill="#d8d8d8"/><path d="M86 150h18v4.500H86z" fill="#fff"/>
            <g fill="#555" font-size="2.300"><text x="14" y="153.500">Student Info</text><text x="35" y="153.500">Raw Data</text><text x="53" y="153.500">Problem 1</text><text x="71" y="153.500">Problem 2</text><text x="89" y="153.500" fill="#217346" font-weight="700">Problem 3</text><text x="108" y="153.500">Problem 4</text><text x="126" y="153.500">+</text><text x="4" y="158.700">Ready</text><text x="15" y="158.700">Accessibility: Good to go</text><text x="246" y="158.700">100%</text></g>
            <path d="M192 156h8v4h-8z" fill="#999"/><path d="M218 157.500h20v.8h-20z" fill="#999"/><circle cx="228" cy="158" r="1.500" fill="#fff"/>
            <path d="M227 128h27v17h-27z" fill="#fafafa" stroke="#ddd" stroke-width=".5"/><path d="M228 129h25.500v1H228z" fill="#1f7d43"/>
        </svg>
    </div>

    <script>
        const columns = 'ABCDEFGHIJKLMNOPQRSTUVWX'.split('');
        const rowCount = 37;
        const cells = { I1: 'Decision=' };

        const head = document.querySelector('#grid thead');
        const body = document.querySelector('#grid tbody');

        head.innerHTML = '<tr><td class="corner"></td>' +
            columns.map(c => `<th scope="col" class="${c === 'A' ? 'selected' : ''}">${c}</th>`).join('') + '</tr>';

        // one extra row without a number fills the strip above the sheet tabs
        for (let r = 1; r <= rowCount + 1; r++) {
            const row = document.createElement('tr');
            row.innerHTML = `<th scope="row" class="${r === 1 ? 'selected' : ''}">${r <= rowCount ? r : ''}</th>` +
                columns.map(c => `<td class="${c + r === 'A1' ? 'active-cell' : ''}">${cells[c + r] || ''}</td>`).join('');
            body.appendChild(row);
        }

        // grid lines of the preview
        let d = '';
        for (let x = 14.5; x < 254; x += 10.6) d += `M${x.toFixed(1)} 38V148`;
        for (let y = 41; y < 148; y += 3) d += `M3 ${y}H254`;
        document.getElementById('preview-lines').innerHTML = `<path d="${d}"/>`;
    </script>
</body>
</html>
```

FILE: styles.css
```css
* {
    margin: 0;
    padding: 0;
    box-sizing: border-box;
}

body {
    height: 100vh;
    display: flex;
    flex-direction: column;
    overflow: hidden;
    background: #fff;
    color: #000;
    font-family: 'Inter', 'Liberation Sans', sans-serif;
    font-size: 21px;
}

button {
    border: none;
    background: none;
    font: inherit;
    color: inherit;
    display: flex;
    align-items: center;
    justify-content: center;
}

a {
    color: inherit;
    text-decoration: none;
}

svg {
    display: block;
    flex: none;
    overflow: visible;
}

svg text {
    fill: #3b3b3b;
    font-family: 'Open Sans', sans-serif;
}

.sprite {
    position: absolute;
    width: 0;
    height: 0;
}

/* title bar */
.titlebar {
    position: relative;
    flex: none;
    height: 76px;
    padding: 4px 24px 0 42px;
    display: flex;
    align-items: center;
    background: #1f7d43;
    color: #fff;
}

.titlebar svg {
    fill: none;
    stroke: #fff;
    stroke-width: 2;
}

.titlebar .solid {
    fill: #fff;
}

.autosave {
    width: 120px;
    font-size: 22px;
    font-weight: 600;
    color: #cfe4d7;
}

.switch {
    position: relative;
    width: 80px;
    height: 28px;
    border-radius: 14px;
    background: linear-gradient(#234a31, #35624a);
}

.switch input {
    appearance: none;
    width: 26px;
    height: 26px;
    margin: 1px;
    border-radius: 50%;
    background: #fff;
    box-shadow: 0 1px 3px rgba(0, 0, 0, 0.5);
}

.switch-text {
    position: absolute;
    left: 32px;
    top: 0;
    line-height: 28px;
    font-size: 16px;
    font-weight: 600;
    letter-spacing: 1px;
    color: #d5e5db;
}

.quick {
    margin-left: 26px;
    display: flex;
    align-items: center;
    gap: 25px;
}

.quick .undo-more {
    margin: 0 -5px 0 -9px;
}

.quick .undo-more svg {
    stroke: none;
}

.doc-title {
    position: absolute;
    left: 943px;
    top: 7px;
    width: 732px;
    height: 67px;
    background: #fff;
}

.title-right {
    margin-left: auto;
    display: flex;
    align-items: center;
    gap: 36px;
}

/* ribbon tabs */
.tabs {
    flex: none;
    height: 68px;
    padding: 0 20px 0 22px;
    display: flex;
    align-items: flex-start;
    gap: 48px;
    background: #f5f5f5;
    color: #262626;
    font-size: 26px;
    font-weight: 500;
}

.tabs > a {
    line-height: 50px;
    margin-top: 4px;
}

.tabs .active {
    font-weight: 700;
    border-bottom: 6px solid transparent;
    border-radius: 3px;
    background: linear-gradient(#217346, #217346) bottom / 100% 6px no-repeat border-box;
    height: 52px;
}

.tell-me {
    display: flex;
    align-items: center;
    gap: 18px;
    margin-left: -10px;
}

.tabs-right {
    margin-left: auto;
    display: flex;
    align-items: center;
    gap: 20px;
    padding-top: 5px;
}

.tabs-right button {
    height: 48px;
    padding: 0 12px 0 17px;
    gap: 10px;
    border: 1px solid #d0d0d0;
    border-radius: 8px;
    background: #fff;
    color: #217346;
    font-size: 24px;
    font-weight: 700;
}

.tabs-right .comments {
    height: 54px;
    padding-right: 42px;
}

.tabs-right svg {
    fill: none;
    stroke: #217346;
    stroke-width: 2;
}

/* ribbon */
.ribbon {
    flex: none;
    height: 142px;
    padding-bottom: 16px;
    display: flex;
    background: linear-gradient(#f3f3f3, #ececec);
    border-bottom: 2px solid #cbcbcb;
}

.ribbon button {
    color: #000;
}

.ribbon use,
.chev,
.drop {
    color: #3b3b3b;
}

.group {
    flex: none;
    padding: 0 20px;
    display: flex;
    border-right: 2px solid #d2d2d2;
}

.group.tight {
    padding-right: 16px;
}

.group.wide {
    padding: 0 26px;
}

.group.clipboard {
    padding-left: 32px;
    gap: 16px;
}

.group.rows {
    padding-top: 10px;
    flex-direction: column;
    gap: 22px;
}

.row {
    height: 48px;
    display: flex;
    align-items: center;
    gap: 4px;
}

.row.low {
    height: 36px;
}

.split {
    display: flex;
}

.tool {
    width: 48px;
    height: 100%;
    min-height: 36px;
}

.pressed {
    border-radius: 6px;
    background: #c4c4c4;
}

.drop {
    width: 24px;
}

.sep {
    width: 2px;
    height: 36px;
    margin: 0 12px;
    background: #d2d2d2;
}

.lines path {
    fill: none;
    stroke: #3b3b3b;
    stroke-width: 2;
}

.lines .blue {
    stroke: #2a8ed4;
}

.ribbon .bold,
.ribbon .italic,
.ribbon .underline {
    font-size: 25px;
    color: #3b3b3b;
}

.ribbon .bold {
    font-weight: 700;
}

.ribbon .italic {
    font-family: 'Liberation Serif', serif;
    font-size: 29px;
    font-style: italic;
}

.ribbon .underline {
    text-decoration: underline;
    text-decoration-thickness: 2px;
    text-underline-offset: 5px;
}

.ribbon .symbol {
    font-family: 'Open Sans', sans-serif;
    font-size: 36px;
    font-weight: 300;
    line-height: 36px;
    color: #3b3b3b;
}

.select {
    position: relative;
    display: flex;
}

.select select {
    appearance: none;
    width: 100%;
    height: 48px;
    padding: 0 11px;
    border: 1px solid #b9b9b9;
    border-radius: 6px;
    background: #fff;
    color: #000;
    font: inherit;
    font-size: 24px;
}

.select svg {
    position: absolute;
    right: 9px;
    top: 20px;
    pointer-events: none;
}

.font-name {
    width: 282px;
}

.font-size {
    width: 108px;
}

.number-format {
    width: 310px;
}

.big {
    flex-direction: column;
    justify-content: flex-start;
    padding-top: 10px;
    gap: 9px;
}

.big-icon {
    height: 60px;
    display: flex;
    align-items: center;
    gap: 14px;
}

.clipboard .big-icon {
    gap: 10px;
}

.caption {
    line-height: 24px;
    text-align: center;
}

.styles {
    gap: 18px;
}

.stack {
    padding-top: 6px;
    display: flex;
    flex-direction: column;
    gap: 12px;
}

.line {
    height: 32px;
    display: flex;
    align-items: center;
    justify-content: flex-start;
    gap: 6px;
}

.cells .line {
    gap: 13px;
}

.editing {
    gap: 14px;
}

.analyze {
    border-right: none;
}

/* formula bar */
.formula-bar {
    flex: none;
    height: 58px;
    padding-right: 8px;
    display: flex;
    align-items: center;
    border-bottom: 6px double #999;
}

.name-box {
    width: 172px;
    height: 52px;
    padding: 0 10px 0 18px;
    display: flex;
    align-items: center;
    border: 2px solid #b0b0b0;
    border-bottom: none;
    margin-right: 27px;
}

.name-box input {
    flex: 1;
    min-width: 0;
    border: none;
    font: inherit;
    font-size: 25px;
    color: #262626;
}

.formula-bar button {
    margin-right: 32px;
}

.formula-bar .fx {
    margin-right: 16px;
    font-family: 'Liberation Serif', serif;
    font-size: 38px;
    font-style: italic;
    line-height: 30px;
    color: #444;
}

.formula {
    flex: 1;
    height: 30px;
    padding-left: 16px;
    border: none;
    border-left: 2px solid #e3e3e3;
    background: #fdfdfd;
    font: inherit;
}

.formula-bar .expand {
    margin: 0 0 0 20px;
}

/* grid */
.sheet {
    position: relative;
    flex: 1;
    min-height: 0;
    overflow: hidden;
}

.grid {
    width: 2590px;
    table-layout: fixed;
    border-collapse: separate;
    border-spacing: 0;
    font-family: 'Lato', 'Open Sans', sans-serif;
    font-size: 20px;
}

.grid th {
    padding: 0 2px 2px 0;
    font-weight: 400;
    color: #555;
}

.grid thead th {
    height: 44px;
    border-bottom: 2px solid #b5b5b5;
    background: linear-gradient(transparent, #d4d4d4) right / 2px 100% no-repeat, linear-gradient(#fff, #f5f5f5);
}

.grid .corner {
    width: 46px;
    height: 44px;
    border-right: 2px solid #b5b5b5;
    border-bottom: 2px solid #b5b5b5;
    background: linear-gradient(135deg, transparent 50%, #dedede 50%) 10px 8px / 30px 30px no-repeat, #fafafa;
}

.grid tbody th {
    height: 30px;
    border-right: 2px solid #b5b5b5;
    line-height: 24px;
    background: linear-gradient(90deg, transparent, #d4d4d4) bottom / 100% 2px no-repeat, linear-gradient(90deg, #fff, #f8f8f8);
}

.grid thead .selected,
.grid tbody .selected {
    background: #f1f1f1;
    color: #217346;
    font-weight: 700;
}

.grid tbody td {
    position: relative;
    height: 30px;
    padding-left: 4px;
    border-right: 2px solid #d4d4d4;
    border-bottom: 2px solid #d4d4d4;
    line-height: 24px;
    white-space: nowrap;
}

.grid tbody .active-cell {
    z-index: 1;
}

.grid .active-cell::before {
    content: '';
    position: absolute;
    inset: -4px;
    border: 4px solid #217346;
}

.grid .active-cell::after {
    content: '';
    position: absolute;
    right: -8px;
    bottom: -8px;
    width: 14px;
    height: 14px;
    border: 2px solid #fff;
    background: #217346;
}

.scroll-y {
    position: absolute;
    z-index: 2;
    right: 6px;
    top: 48px;
    bottom: 35px;
    width: 14px;
    border-radius: 7px;
    background: rgba(0, 0, 0, 0.3);
}

.scroll-x {
    position: absolute;
    z-index: 2;
    left: 50px;
    right: 142px;
    bottom: 6px;
    height: 14px;
    border-radius: 7px;
    background: rgba(0, 0, 0, 0.3);
}

/* sheet tabs */
.sheet-tabs {
    flex: none;
    height: 52px;
    display: flex;
    align-items: flex-start;
    border-top: 2px solid #c9c9c9;
    background: linear-gradient(#e8e8e8, #f0f0f0 12px);
    color: #555;
    font-size: 24px;
}

.sheet-arrows {
    width: 122px;
    height: 41px;
    padding: 6px 30px 0;
    display: flex;
    align-items: center;
    gap: 32px;
    fill: #b5b5b5;
    border-right: 2px solid #cfcfcf;
}

.sheet-tabs a {
    height: 41px;
    padding: 4px 33px 0;
    line-height: 41px;
    border-right: 2px solid #cfcfcf;
}

.sheet-tabs .active {
    position: relative;
    z-index: 3;
    height: 46px;
    margin-top: -2px;
    padding-top: 6px;
    border-right: none;
    border-radius: 0 0 6px 6px;
    background: #fff;
    box-shadow: 0 2px 2px rgba(0, 0, 0, 0.35);
    color: #217346;
    font-weight: 700;
}

.sheet-tabs button {
    width: 76px;
    height: 41px;
    padding-top: 6px;
    border-right: 2px solid #cfcfcf;
}

/* status bar */
.status {
    flex: none;
    height: 46px;
    padding: 0 48px;
    display: flex;
    align-items: center;
    border-top: 2px solid #9f9f9f;
    background: linear-gradient(#e3e3e3, #d7d7d7);
    color: #4d4d4d;
    font-size: 24px;
}

.a11y {
    margin-left: 40px;
    gap: 4px;
}

.status svg {
    fill: none;
    stroke: #666;
    stroke-width: 2;
}

.views {
    margin-left: auto;
    display: flex;
}

.views button {
    width: 70px;
    height: 48px;
}

.views .current {
    width: 74px;
    background: #a6a6a6;
}

.views .current svg {
    stroke: #fff;
}

.zoom {
    margin-left: 17px;
    display: flex;
    align-items: center;
    gap: 14px;
}

.zoom input {
    appearance: none;
    width: 200px;
    height: 8px;
    border-radius: 4px;
    background: #9b9b9b;
}

.zoom input::-webkit-slider-thumb {
    appearance: none;
    width: 32px;
    height: 32px;
    border-radius: 50%;
    background: #fff;
    box-shadow: 0 1px 3px rgba(0, 0, 0, 0.4);
}

.zoom-value {
    margin-left: 20px;
}

/* capture preview in the corner */
.preview {
    position: absolute;
    z-index: 4;
    right: 24px;
    bottom: 142px;
    padding: 8px;
    border-radius: 8px;
    background: #fff;
    box-shadow: 0 0 4px rgba(0, 0, 0, 0.25), 0 0 60px rgba(0, 0, 0, 0.18);
}

.preview svg {
    width: 256px;
    height: 160px;
    outline: 1px solid #999;
    outline-offset: -1px;
}

.preview text {
    font-family: 'Inter', sans-serif;
    fill: inherit;
}
```
